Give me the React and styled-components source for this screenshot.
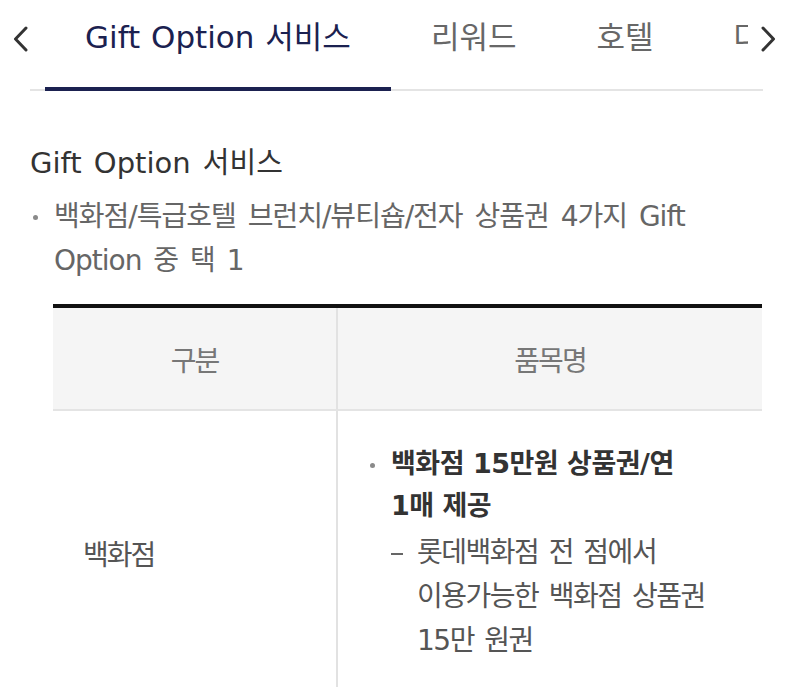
import React from "react";
import styled, { createGlobalStyle, css } from "styled-components";

const GlobalStyle = createGlobalStyle`
  * {
    box-sizing: border-box;
  }

  body {
    margin: 0;
    background-color: #ffffff;
    font-family: "DejaVu Sans", "Noto Sans CJK KR", sans-serif;
    word-break: keep-all;
  }

  ul {
    margin: 0;
    padding: 0;
    list-style: none;
  }
`;

const StyledNav = styled.nav`
  position: relative;
  height: 92px;

  display: flex;
  align-items: flex-start;

  &::after {
    content: "";
    position: absolute;
    left: 30px;
    right: 37px;
    bottom: 1px;
    height: 2px;

    background-color: #e4e4e4;
  }
`;

const StyledArrow = styled.button`
  width: ${({ side }) => (side === "left" ? "45px" : "52px")};
  height: 78px;
  padding: 0;
  padding-left: ${({ side }) => (side === "left" ? "13px" : "13px")};

  display: flex;
  align-items: center;

  border: none;
  background: none;
  color: #333333;
`;

const StyledTabScroller = styled.div`
  flex: 1;
  overflow: hidden;

  display: flex;
  position: relative;
  z-index: 1;
`;

const StyledTab = styled.div`
  flex-shrink: 0;
  height: 91px;
  padding: 14px 40px 0;

  font-size: 31px;
  font-weight: 400;
  line-height: 46px;
  letter-spacing: 0;
  word-spacing: 1px;
  white-space: nowrap;

  border-bottom: 4px solid transparent;

  ${({ isActive }) =>
    isActive
      ? css`
          color: #1b2150;
          border-bottom-color: #1b2150;
        `
      : css`
          color: #676767;
        `};
`;

const StyledContent = styled.section`
  padding: 51px 38px 0 30px;
`;

const StyledTitle = styled.h2`
  margin: 0;

  color: #333333;
  font-size: 29px;
  font-weight: 400;
  line-height: 40px;
  letter-spacing: 0;
  word-spacing: 3px;
`;

const StyledIntroList = styled.ul`
  margin-top: 12px;
  padding: 0 40px 0 3px;
`;

const StyledBullet = styled.li`
  position: relative;
  padding-left: 21px;

  color: ${({ strong }) => (strong ? "#333333" : "#666666")};
  font-size: ${({ strong }) => (strong ? "27px" : "28px")};
  font-weight: ${({ strong }) => (strong ? 700 : 400)};
  line-height: ${({ strong }) => (strong ? "42px" : "44px")};
  letter-spacing: ${({ strong }) => (strong ? "-0.5px" : "-1px")};
  word-spacing: ${({ strong }) => (strong ? "0" : "4px")};

  &::before {
    content: "";
    position: absolute;
    left: 0;
    top: 20px;
    width: 5px;
    height: 5px;
    border-radius: 50%;

    background-color: #8a8a8a;
  }
`;

const StyledTable = styled.div`
  margin: 21px 0 0 23px;

  display: grid;
  grid-template-columns: 285px 1fr;

  border-top: 4px solid #111111;
`;

const StyledHeadCell = styled.div`
  height: 103px;

  display: flex;
  align-items: center;
  justify-content: center;

  background-color: #f5f5f5;
  border-bottom: 2px solid #e4e4e4;
  border-right: ${({ first }) => (first ? "2px solid #e2e2e2" : "none")};

  color: #777777;
  font-size: 28px;
  letter-spacing: -2px;
`;

const StyledLabelCell = styled.div`
  padding-left: 30px;

  display: flex;
  align-items: center;

  border-right: 2px solid #e2e2e2;

  color: #555555;
  font-size: 28px;
  letter-spacing: -2px;
`;

const StyledItemCell = styled.div`
  padding: 32px 52px 32px 32px;
`;

const StyledSubList = styled.ul`
  margin-top: 4px;
`;

const StyledDashItem = styled.li`
  position: relative;
  padding-left: 26px;

  color: #555555;
  font-size: 28px;
  font-weight: 400;
  line-height: 44px;
  letter-spacing: -1.5px;
  word-spacing: 3px;

  &::before {
    content: "";
    position: absolute;
    left: 0;
    top: 22px;
    width: 12px;
    height: 2px;

    background-color: #666666;
  }
`;

const Chevron = ({ dir }) => (
  <svg width="15" height="26" viewBox="0 0 15 26" fill="none">
    <path
      d={dir === "left" ? "M13 2 L2.5 13 L13 24" : "M2 2 L12.5 13 L2 24"}
      stroke="currentColor"
      strokeWidth="3"
      strokeLinecap="round"
      strokeLinejoin="round"
    />
  </svg>
);

const TABS = ["Gift Option 서비스", "리워드", "호텔", "다이닝"];

const App = () => {
  return (
    <>
      <GlobalStyle />

      <StyledNav>
        <StyledArrow side="left" aria-label="이전">
          <Chevron dir="left" />
        </StyledArrow>

        <StyledTabScroller>
          {TABS.map((tab, index) => (
            <StyledTab key={index} isActive={index === 0}>
              {tab}
            </StyledTab>
          ))}
        </StyledTabScroller>

        <StyledArrow side="right" aria-label="다음">
          <Chevron dir="right" />
        </StyledArrow>
      </StyledNav>

      <StyledContent>
        <StyledTitle>Gift Option 서비스</StyledTitle>

        <StyledIntroList>
          <StyledBullet>
            백화점/특급호텔 브런치/뷰티숍/전자 상품권 4가지 Gift Option 중 택 1
          </StyledBullet>
        </StyledIntroList>

        <StyledTable>
          <StyledHeadCell first>구분</StyledHeadCell>
          <StyledHeadCell>품목명</StyledHeadCell>

          <StyledLabelCell>백화점</StyledLabelCell>
          <StyledItemCell>
            <ul>
              <StyledBullet strong>
                백화점 15만원 상품권/연 1매 제공
                <StyledSubList>
                  <StyledDashItem>
                    롯데백화점 전 점에서 이용가능한 백화점 상품권 15만 원권
                  </StyledDashItem>
                </StyledSubList>
              </StyledBullet>
            </ul>
          </StyledItemCell>
        </StyledTable>
      </StyledContent>
    </>
  );
};

export default App;
